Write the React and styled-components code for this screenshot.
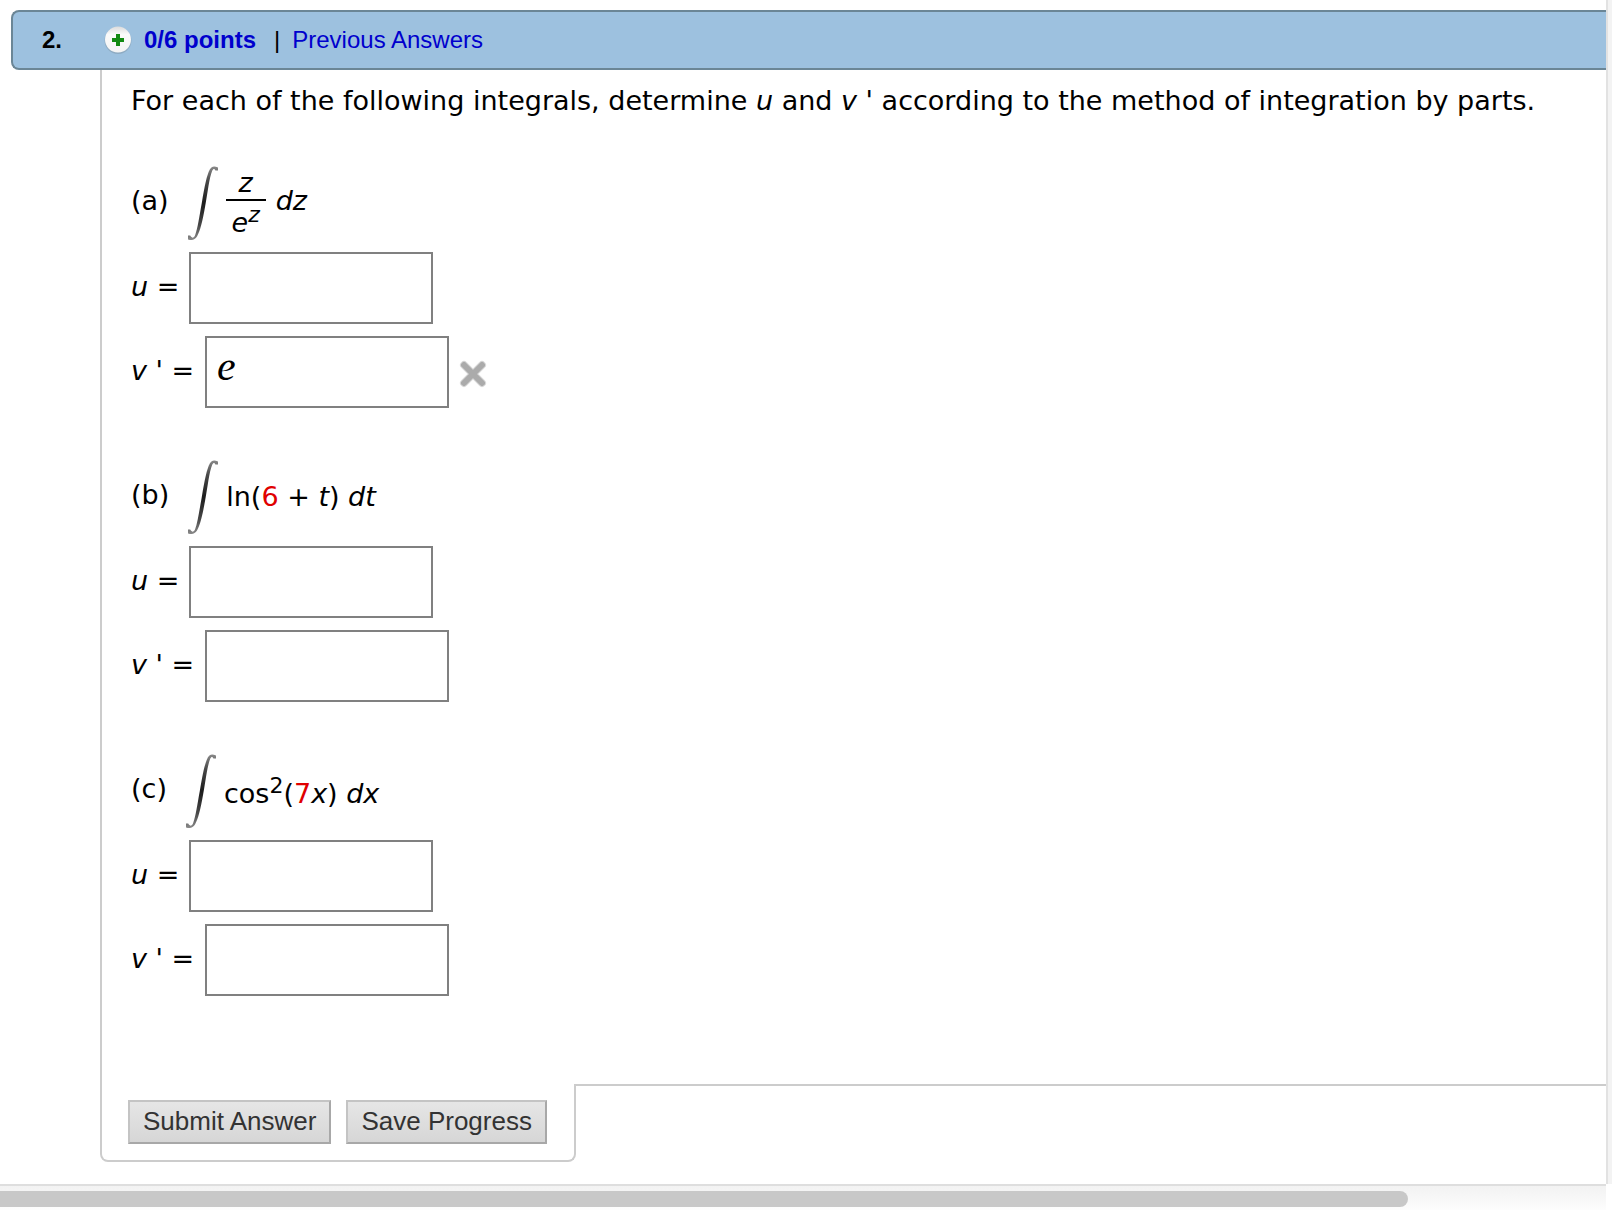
import React from "react";
import styled, { createGlobalStyle } from "styled-components";

const GlobalStyle = createGlobalStyle`
  *, *::before, *::after { box-sizing: border-box; }
  body {
    margin: 0;
    background: #fff;
    color: #000;
    font-family: "DejaVu Sans", Verdana, sans-serif;
    font-size: 27px;
    line-height: 32px;
  }
`;

const Page = styled.div`
  display: grid;
  grid-template-columns: minmax(0, 1fr) 6px;
`;

const Question = styled.main`
  padding: 10px 0 22px 11px;
`;

const Gutter = styled.div`
  background: #f3f3f3;
  border-left: 2px solid #e2e2e2;
`;

const Header = styled.header`
  display: flex;
  align-items: center;
  height: 60px;
  padding-left: 29px;
  background: #9dc1df;
  border: 2px solid #6b8696;
  border-right: 0;
  border-radius: 8px 0 0 8px;
  font-family: "Liberation Sans", Arial, sans-serif;
  font-size: 24px;
`;

const Number = styled.h2`
  width: 62px;
  margin: 0;
  font-size: 24px;
`;

const HeaderLink = styled.a`
  color: #0000cd;
  text-decoration: none;
  font-weight: ${(p) => (p.$bold ? 700 : 400)};
`;

const PointsLink = styled(HeaderLink)`
  display: flex;
  align-items: center;
  gap: 12px;
`;

const Divider = styled.span`
  margin: 0 12px 0 18px;
`;

const Body = styled.form`
  margin-left: 89px;
`;

const Content = styled.div`
  padding: 15px 0 88px 29px;
  border-left: 2px solid #ccc;
`;

const Prompt = styled.p`
  margin: 0 0 49px;
`;

const Parts = styled.div`
  display: grid;
  gap: 52px;
`;

const Part = styled.section`
  display: grid;
  gap: 12px;
`;

const Row = styled.div`
  display: flex;
  align-items: center;
`;

const Expression = styled(Row)`
  height: 74px;
`;

const PartLabel = styled.span`
  padding-bottom: 4px;
  margin-right: 19px;
`;

const IntegralSign = styled.svg`
  width: 30px;
  height: 74px;
  margin-right: 8px;
`;

const Fraction = styled.span`
  display: grid;
  width: 40px;
  margin-right: 10px;
  text-align: center;
`;

const Numerator = styled.i`
  border-bottom: 2px solid #000;
`;

const Differential = styled.i`
  padding-bottom: 4px;
`;

const Power = styled.sup`
  font-size: 22px;
  line-height: 28px;
  vertical-align: 10px;
`;

const Given = styled.span`
  color: #e00000;
`;

const FieldLabel = styled.label`
  width: ${(p) => (p.$wide ? 74 : 58)}px;
  padding-bottom: 2px;
  white-space: pre;
`;

const Answer = styled.input`
  width: 244px;
  height: 72px;
  padding: 0 10px 12px;
  border: 2px solid #808080;
  border-radius: 0;
  background: #fff;
  color: #000;
  font: italic 42px "Liberation Serif", "Times New Roman", serif;
  outline: 0;
`;

const Mark = styled.svg`
  width: 28px;
  height: 28px;
  margin: 4px 0 0 10px;
`;

const Footer = styled.footer`
  display: flex;
`;

const Actions = styled.div`
  display: flex;
  gap: 15px;
  padding: 16px 27px 16px 26px;
  border: 2px solid #ccc;
  border-top: 0;
  border-radius: 0 0 8px 8px;
`;

const FooterRule = styled.div`
  flex: 1;
  align-self: flex-start;
  border-top: 2px solid #ccc;
`;

const Button = styled.button`
  height: 44px;
  padding: 0 13px 2px;
  border: 2px solid;
  border-color: #c4c4c4 #a8a8a8 #a8a8a8 #c4c4c4;
  background: linear-gradient(#e6e6e6, #d6d6d6);
  color: #333;
  font-family: "Liberation Sans", Arial, sans-serif;
  font-size: 26px;
  line-height: 32px;
  white-space: nowrap;
`;

const ScrollTrack = styled.div`
  height: 26px;
  padding-top: 5px;
  border-top: 2px solid #dedede;
  background: linear-gradient(#f2f2f2, #fdfdfd);
`;

const ScrollThumb = styled.div`
  width: calc(100% * ${(p) => p.$visible} / ${(p) => p.$total});
  height: 16px;
  border-radius: 0 8px 8px 0;
  background: #c8c8c8;
`;

function PlusIcon() {
  return (
    <svg width="28" height="28" viewBox="0 0 28 28" aria-hidden="true">
      <defs>
        <linearGradient id="disc" x1="0" y1="0" x2="0" y2="1">
          <stop offset="0" stopColor="#dcdcdc" />
          <stop offset="0.3" stopColor="#fafafa" />
          <stop offset="1" stopColor="#f4f4f4" />
        </linearGradient>
      </defs>
      <circle cx="14" cy="14.6" r="13.4" fill="#8199aa" opacity="0.55" />
      <circle cx="14" cy="13.6" r="13" fill="url(#disc)" />
      <path d="M12 8h4v4h4v4h-4v4h-4v-4H8v-4h4z" fill="#128a12" />
    </svg>
  );
}

function Integral() {
  return (
    <IntegralSign viewBox="0 0 30 74" role="img" aria-label="integral of">
      <defs>
        <linearGradient id="ink" x1="0" y1="0" x2="0" y2="1">
          <stop offset="0" stopColor="#8a8a8a" />
          <stop offset="0.2" stopColor="#484848" />
          <stop offset="0.5" stopColor="#1c1c1c" />
          <stop offset="0.8" stopColor="#484848" />
          <stop offset="1" stopColor="#8a8a8a" />
        </linearGradient>
      </defs>
      <path
        d="M30 4.4 27.4 4.4C26.4 2.4 25.4 2.4 24.2 4.8C21 13 20 25 17.2 40C14.2 57 12 65 9 70.6C6.8 74.2 4 74.4 0 73.4L0 69.6 2.2 69.6C3.8 72.2 5.6 72.4 7 69.6C9.8 62 11.2 51 13.8 37C16.8 19 18.8 9.4 21.8 3.6C23.8 0 26 -0.2 30 1.4Z"
        fill="url(#ink)"
      />
    </IntegralSign>
  );
}

function WrongMark() {
  return (
    <Mark viewBox="0 0 28 28" role="img" aria-label="incorrect">
      <g strokeLinecap="round">
        <path d="M5 5 23 23M23 5 5 23" stroke="#dadada" strokeWidth="8" />
        <path d="M5 5 23 23M23 5 5 23" stroke="#ababab" strokeWidth="6" />
      </g>
    </Mark>
  );
}

const parts = [
  {
    id: "a",
    value: "e",
    wrong: true,
    integrand: (
      <>
        <Fraction>
          <Numerator>z</Numerator>
          <i>
            e<Power>z</Power>
          </i>
        </Fraction>
        <Differential>dz</Differential>
      </>
    ),
  },
  {
    id: "b",
    integrand: (
      <span>
        ln(<Given>6</Given> + <i>t</i>) <i>dt</i>
      </span>
    ),
  },
  {
    id: "c",
    integrand: (
      <span>
        cos<Power>2</Power>(<Given>7</Given>
        <i>x</i>) <i>dx</i>
      </span>
    ),
  },
];

function IntegralPart({ id, integrand, value = "", wrong }) {
  return (
    <Part>
      <Expression>
        <PartLabel>({id})</PartLabel>
        <Integral />
        {integrand}
      </Expression>
      <Row>
        <FieldLabel htmlFor={`${id}-u`}>
          <i>u</i> =
        </FieldLabel>
        <Answer id={`${id}-u`} type="text" />
      </Row>
      <Row>
        <FieldLabel htmlFor={`${id}-v`} $wide>
          <i>v</i> ' =
        </FieldLabel>
        <Answer id={`${id}-v`} type="text" defaultValue={value} />
        {wrong && <WrongMark />}
      </Row>
    </Part>
  );
}

export default function App() {
  return (
    <>
      <GlobalStyle />
      <Page>
        <Question>
          <Header>
            <Number>2.</Number>
            <PointsLink href="#points" $bold>
              <PlusIcon />
              0/6 points
            </PointsLink>
            <Divider>|</Divider>
            <HeaderLink href="#previous">Previous Answers</HeaderLink>
          </Header>
          <Body onSubmit={(e) => e.preventDefault()}>
            <Content>
              <Prompt>
                For each of the following integrals, determine <i>u</i> and <i>v</i> ' according to
                the method of integration by parts.
              </Prompt>
              <Parts>
                {parts.map((part) => (
                  <IntegralPart key={part.id} {...part} />
                ))}
              </Parts>
            </Content>
            <Footer>
              <Actions>
                <Button type="submit">Submit Answer</Button>
                <Button type="button">Save Progress</Button>
              </Actions>
              <FooterRule />
            </Footer>
          </Body>
        </Question>
        <Gutter />
        <ScrollTrack>
          <ScrollThumb $visible={57} $total={65} />
        </ScrollTrack>
      </Page>
    </>
  );
}
